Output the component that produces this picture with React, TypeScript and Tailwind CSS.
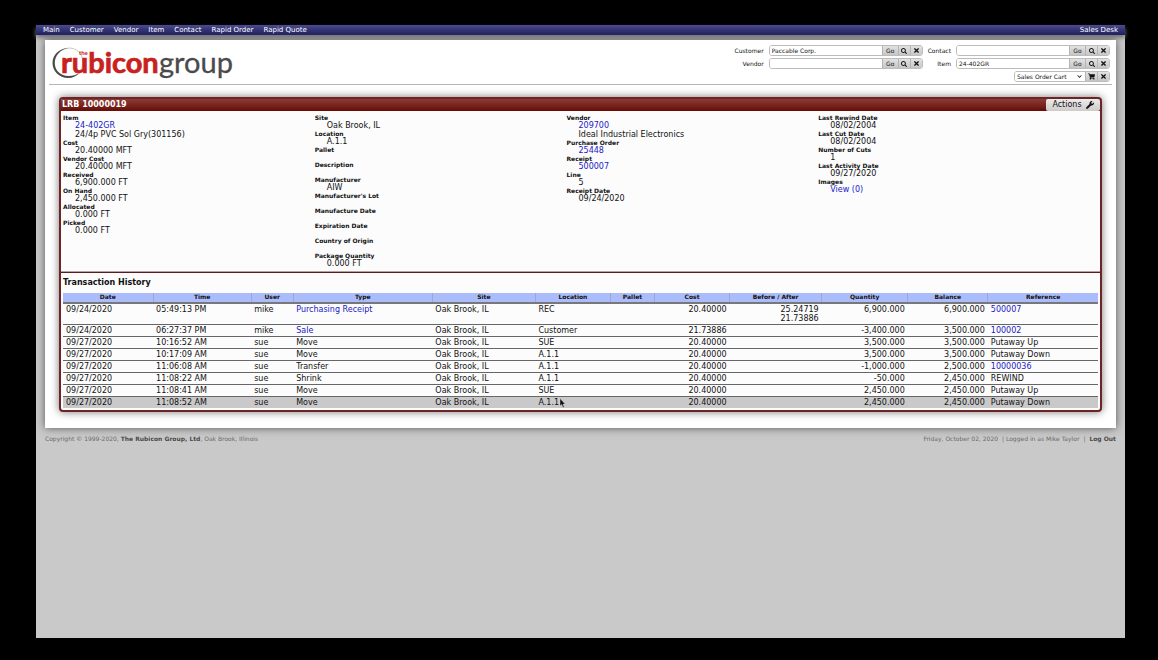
import type { ReactNode } from 'react';
import { FaChevronDown, FaSearch, FaShoppingCart, FaTimes, FaWrench } from 'react-icons/fa';

interface Field {
  label: string;
  values: { text: string; link?: boolean }[];
}

interface Transaction {
  date: string;
  time: string;
  user: string;
  type: string;
  typeLink?: boolean;
  location: string;
  cost: string;
  beforeAfter?: string[];
  quantity: string;
  balance: string;
  reference: string;
  referenceLink?: boolean;
}

const navItems = ['Main', 'Customer', 'Vendor', 'Item', 'Contact', 'Rapid Order', 'Rapid Quote'];

const fieldColumns: Field[][] = [
  [
    { label: 'Item', values: [{ text: '24-402GR', link: true }, { text: '24/4p PVC Sol Gry(301156)' }] },
    { label: 'Cost', values: [{ text: '20.40000 MFT' }] },
    { label: 'Vendor Cost', values: [{ text: '20.40000 MFT' }] },
    { label: 'Received', values: [{ text: '6,900.000 FT' }] },
    { label: 'On Hand', values: [{ text: '2,450.000 FT' }] },
    { label: 'Allocated', values: [{ text: '0.000 FT' }] },
    { label: 'Picked', values: [{ text: '0.000 FT' }] },
  ],
  [
    { label: 'Site', values: [{ text: 'Oak Brook, IL' }] },
    { label: 'Location', values: [{ text: 'A.1.1' }] },
    { label: 'Pallet', values: [] },
    { label: 'Description', values: [] },
    { label: 'Manufacturer', values: [{ text: 'AIW' }] },
    { label: "Manufacturer's Lot", values: [] },
    { label: 'Manufacture Date', values: [] },
    { label: 'Expiration Date', values: [] },
    { label: 'Country of Origin', values: [] },
    { label: 'Package Quantity', values: [{ text: '0.000 FT' }] },
  ],
  [
    { label: 'Vendor', values: [{ text: '209700', link: true }, { text: 'Ideal Industrial Electronics' }] },
    { label: 'Purchase Order', values: [{ text: '25448', link: true }] },
    { label: 'Receipt', values: [{ text: '500007', link: true }] },
    { label: 'Line', values: [{ text: '5' }] },
    { label: 'Receipt Date', values: [{ text: '09/24/2020' }] },
  ],
  [
    { label: 'Last Rewind Date', values: [{ text: '08/02/2004' }] },
    { label: 'Last Cut Date', values: [{ text: '08/02/2004' }] },
    { label: 'Number of Cuts', values: [{ text: '1' }] },
    { label: 'Last Activity Date', values: [{ text: '09/27/2020' }] },
    { label: 'Images', values: [{ text: 'View (0)', link: true }] },
  ],
];

const columns = [
  { title: 'Date', width: 'w-[90px]' },
  { title: 'Time', width: 'w-[98px]' },
  { title: 'User', width: 'w-[42px]' },
  { title: 'Type', width: 'w-[139px]' },
  { title: 'Site', width: 'w-[103px]' },
  { title: 'Location', width: 'w-[75px]' },
  { title: 'Pallet', width: 'w-[44px]' },
  { title: 'Cost', width: 'w-[75px]' },
  { title: 'Before / After', width: 'w-[92px]' },
  { title: 'Quantity', width: 'w-[86px]' },
  { title: 'Balance', width: 'w-[80px]' },
  { title: 'Reference', width: 'w-[110px]' },
];

const transactions: Transaction[] = [
  { date: '09/24/2020', time: '05:49:13 PM', user: 'mike', type: 'Purchasing Receipt', typeLink: true, location: 'REC', cost: '20.40000', beforeAfter: ['25.24719', '21.73886'], quantity: '6,900.000', balance: '6,900.000', reference: '500007', referenceLink: true },
  { date: '09/24/2020', time: '06:27:37 PM', user: 'mike', type: 'Sale', typeLink: true, location: 'Customer', cost: '21.73886', quantity: '-3,400.000', balance: '3,500.000', reference: '100002', referenceLink: true },
  { date: '09/27/2020', time: '10:16:52 AM', user: 'sue', type: 'Move', location: 'SUE', cost: '20.40000', quantity: '3,500.000', balance: '3,500.000', reference: 'Putaway Up' },
  { date: '09/27/2020', time: '10:17:09 AM', user: 'sue', type: 'Move', location: 'A.1.1', cost: '20.40000', quantity: '3,500.000', balance: '3,500.000', reference: 'Putaway Down' },
  { date: '09/27/2020', time: '11:06:08 AM', user: 'sue', type: 'Transfer', location: 'A.1.1', cost: '20.40000', quantity: '-1,000.000', balance: '2,500.000', reference: '10000036', referenceLink: true },
  { date: '09/27/2020', time: '11:08:22 AM', user: 'sue', type: 'Shrink', location: 'A.1.1', cost: '20.40000', quantity: '-50.000', balance: '2,450.000', reference: 'REWIND' },
  { date: '09/27/2020', time: '11:08:41 AM', user: 'sue', type: 'Move', location: 'SUE', cost: '20.40000', quantity: '2,450.000', balance: '2,450.000', reference: 'Putaway Up' },
  { date: '09/27/2020', time: '11:08:52 AM', user: 'sue', type: 'Move', location: 'A.1.1', cost: '20.40000', quantity: '2,450.000', balance: '2,450.000', reference: 'Putaway Down' },
];

const TextLink = ({ children }: { children: ReactNode }) => (
  <a href="#" className="text-[#2018c8]">
    {children}
  </a>
);

const Logo = () => (
  <svg width="184" height="36" viewBox="0 0 184 36" role="img" aria-label="the rubicon group">
    {/* open ring that thins out towards the top right */}
    <path d="M17 3 C7 3 0.500 10 0.500 18 C0.500 26 7 33 16 33 C21 33 25 31 28 27.500 C24.500 30 20.500 31 16.500 31 C8.500 31 2.800 25.500 2.800 18 C2.800 10.500 8.500 4.200 17 3 Z" fill="#4a4a4c" />
    <path d="M15 3.200 C22 2.200 28 6 30 12 C31.400 18 30.500 24 26.500 28.500" fill="none" stroke="#b9b9bb" strokeWidth="0.8" />
    <text x="9" y="28" fill="#c9211e" stroke="#c9211e" strokeWidth="0.7" fontSize="29" fontWeight="700" fontFamily="Lato, sans-serif">
      rubicon
    </text>
    <text x="107" y="28" fill="#4a4a4c" stroke="#4a4a4c" strokeWidth="0.3" fontSize="29" fontFamily="Lato, sans-serif">
      group
    </text>
    <text x="27" y="10" fill="#c9211e" fontSize="6" fontWeight="700" fontFamily="Lato, sans-serif">
      the
    </text>
  </svg>
);

const toolButton =
  'flex h-full items-center justify-center border-l border-[#b4b4b4] bg-linear-to-b from-[#e2e2e2] to-[#c6c6c6] text-[#111]';

const Lookup = ({ label, value = '' }: { label: string; value?: string }) => {
  const id = `lookup-${label.toLowerCase()}`;
  return (
    <div className="flex h-[11px] items-center gap-[5px]">
      <label htmlFor={id}>{label}</label>
      <div className="flex h-full items-center overflow-hidden rounded-[3px] border border-[#bcbcbc]">
        <input id={id} type="text" defaultValue={value} className="h-full w-28 bg-white px-[2px] outline-none" />
        <button type="button" className={`${toolButton} w-4`}>
          Go
        </button>
        <button type="button" aria-label={`Search ${label}`} className={`${toolButton} w-3`}>
          <FaSearch size={6} />
        </button>
        <button type="button" aria-label={`Clear ${label}`} className={`${toolButton} w-3`}>
          <FaTimes size={7} />
        </button>
      </div>
    </div>
  );
};

const DetailField = ({ field }: { field: Field }) => (
  <div className={field.values.length ? '' : 'pb-2'}>
    <dt className="text-[6px] leading-[7px] font-bold">{field.label}</dt>
    {field.values.map((value) => (
      <dd key={value.text} className="pl-3 leading-[9px]">
        {value.link ? <TextLink>{value.text}</TextLink> : value.text}
      </dd>
    ))}
  </div>
);

const Pointer = () => (
  <svg className="absolute top-px left-6 z-10" width="7" height="11" viewBox="0 0 7 11" aria-hidden="true">
    <path d="M1 0.500 L1 8 L2.700 6.500 L4 9.500 L5.200 9 L4 6.100 L6.200 6 Z" fill="#111" stroke="#ddd" strokeWidth="0.400" />
  </svg>
);

const TransactionTable = () => (
  <table className="w-full table-fixed border-collapse">
    <thead>
      <tr className="border-b-2 border-[#77777c] bg-[#abbcfb] text-[6px] leading-[8px]">
        {columns.map((column) => (
          <th key={column.title} className={`${column.width} border-r border-[#98a6d8] p-0 pb-px font-bold last:border-r-0`}>
            {column.title}
          </th>
        ))}
      </tr>
    </thead>
    <tbody className="leading-[9px] [&_td]:px-[3px] [&_td]:py-px [&_td]:align-top">
      {transactions.map((row, index) => {
        const isLast = index === transactions.length - 1;
        return (
          <tr key={row.time} className={isLast ? 'bg-[#c9c9c9]' : 'border-b border-[#66666a]'}>
            <td>{row.date}</td>
            <td>{row.time}</td>
            <td>{row.user}</td>
            <td>{row.typeLink ? <TextLink>{row.type}</TextLink> : row.type}</td>
            <td>Oak Brook, IL</td>
            <td className="relative">
              {row.location}
              {isLast && <Pointer />}
            </td>
            <td />
            <td className="text-right">{row.cost}</td>
            <td className="text-right">
              {row.beforeAfter?.map((amount) => (
                <div key={amount}>{amount}</div>
              ))}
            </td>
            <td className="text-right">{row.quantity}</td>
            <td className="text-right">{row.balance}</td>
            <td>{row.referenceLink ? <TextLink>{row.reference}</TextLink> : row.reference}</td>
          </tr>
        );
      })}
    </tbody>
  </table>
);

export default function App() {
  return (
    <div className="flex min-h-screen flex-col bg-black pt-[25px] pr-[33px] pb-[22px] pl-9 font-['DejaVu_Sans',Verdana,sans-serif] text-[8px] text-[#111]">
      <div className="flex-1 bg-[#c9c9c9]">
        <nav className="flex h-[10px] items-center bg-linear-to-b from-[#4b4b8e] to-[#1f1f60] px-[7px] text-[7px] leading-[9px] text-white shadow-[0_3px_4px_#777]">
          <div className="flex gap-[10px]">
            {navItems.map((item) => (
              <a key={item} href="#">
                {item}
              </a>
            ))}
          </div>
          <a href="#" className="ml-auto">
            Sales Desk
          </a>
        </nav>

        <main className="mx-[9px] mt-[5px] bg-white px-1 pb-4 shadow-[0_0_8px_#555]">
          <header className="flex items-start justify-between border-b border-[#b5b5b5] pt-[5px] pr-[2px] pb-[2px] pl-[3px]">
            <Logo />
            <div className="grid grid-cols-[auto_auto] justify-items-end gap-x-[5px] gap-y-[2px] text-[6px] leading-[9px]">
              <Lookup label="Customer" value="Paccable Corp." />
              <Lookup label="Contact" />
              <Lookup label="Vendor" />
              <Lookup label="Item" value="24-402GR" />
              <div className="col-span-2 flex h-[11px] items-center overflow-hidden rounded-[3px] border border-[#bcbcbc]">
                <div className="relative h-full">
                  <select aria-label="Cart" className="h-full w-[70px] appearance-none bg-white px-[2px] outline-none">
                    <option>Sales Order Cart</option>
                  </select>
                  <FaChevronDown size={5} className="pointer-events-none absolute top-[2px] right-[3px]" />
                </div>
                <button type="button" aria-label="Open cart" className={`${toolButton} w-3`}>
                  <FaShoppingCart size={7} />
                </button>
                <button type="button" aria-label="Clear cart" className={`${toolButton} w-3`}>
                  <FaTimes size={7} />
                </button>
              </div>
            </div>
          </header>

          <section className="mx-[10px] mt-3 overflow-hidden rounded-[4px] border-2 border-[#6e2424] bg-[#fcfcfc] shadow-[0_0_9px_#777]">
            <div className="flex h-3 items-center justify-between bg-linear-to-b from-[#8c3b36] to-[#660a05] pl-px">
              <h1 className="text-[8px] leading-[10px] font-bold text-white">LRB 10000019</h1>
              <button
                type="button"
                className="flex h-full w-[54px] items-center justify-center gap-1 rounded-[2px] bg-linear-to-b from-[#ececec] to-[#cfcbc9] text-[#111]"
              >
                Actions
                <FaWrench size={8} />
              </button>
            </div>

            <div className="grid grid-cols-4 border-b border-[#b8a0a0] py-[3px] pr-[30px] pl-[2px]">
              {fieldColumns.map((fields) => (
                <dl key={fields[0].label}>
                  {fields.map((field) => (
                    <DetailField key={field.label} field={field} />
                  ))}
                </dl>
              ))}
            </div>

            <div className="border-t border-[#5c1a1c] px-[2px] pb-[2px]">
              <h2 className="py-[5px] text-[8px] leading-[10px] font-bold">Transaction History</h2>
              <TransactionTable />
            </div>
          </section>
        </main>

        <footer className="mx-[9px] mt-[6px] flex justify-between text-[6px] leading-[9px] text-[#6a6a6a]">
          <p>
            Copyright © 1999-2020, <b className="text-[#4a4a4a]">The Rubicon Group, Ltd</b>, Oak Brook, Illinois
          </p>
          <div className="flex gap-1">
            <span>Friday, October 02, 2020</span>
            <span>| Logged in as Mike Taylor</span>
            <span>|</span>
            <a href="#" className="font-bold text-[#4a4a4a]">
              Log Out
            </a>
          </div>
        </footer>
      </div>
    </div>
  );
}
